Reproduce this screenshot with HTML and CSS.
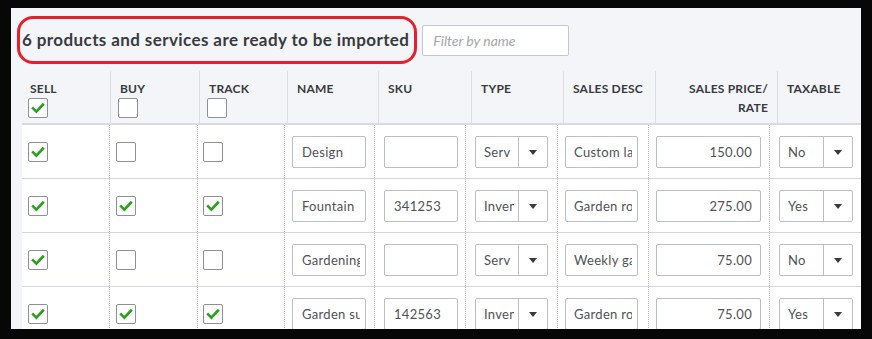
FILE: index.html
```html
<!DOCTYPE html>
<html>
<head>
<meta charset="utf-8">
<link rel="stylesheet" href="styles.css">
</head>
<body>
<div class="panel">
  <div class="titlebar">
    <h1 class="title">6 products and services are ready to be imported</h1>
    <div class="filter">Filter by name</div>
  </div>

  <div class="head">
    <div class="hc"><span>SELL</span><span class="cb checked"><svg viewBox="0 0 20 20"><path d="M4.6 10.4 L8.2 14 L15.4 6.4"/></svg></span></div>
    <div class="hc"><span>BUY</span><span class="cb"></span></div>
    <div class="hc"><span>TRACK</span><span class="cb"></span></div>
    <div class="hc">NAME</div>
    <div class="hc">SKU</div>
    <div class="hc">TYPE</div>
    <div class="hc">SALES DESC</div>
    <div class="hc right">SALES PRICE/<br>RATE</div>
    <div class="hc">TAXABLE</div>
  </div>

  <div class="row">
    <div class="bc"><span class="cb checked"><svg viewBox="0 0 20 20"><path d="M4.6 10.4 L8.2 14 L15.4 6.4"/></svg></span></div>
    <div class="bc"><span class="cb"></span></div>
    <div class="bc"><span class="cb"></span></div>
    <div class="bc"><div class="inp"><span class="t">Design</span></div></div>
    <div class="bc"><div class="inp"><span class="t"></span></div></div>
    <div class="bc"><div class="sel"><span class="val"><span class="t">Serv</span></span><span class="arr"></span></div></div>
    <div class="bc"><div class="inp"><span class="t">Custom lawn design</span></div></div>
    <div class="bc"><div class="inp num"><span class="t">150.00</span></div></div>
    <div class="bc"><div class="sel tax"><span class="val"><span class="t">No</span></span><span class="arr"></span></div></div>
  </div>

  <div class="row">
    <div class="bc"><span class="cb checked"><svg viewBox="0 0 20 20"><path d="M4.6 10.4 L8.2 14 L15.4 6.4"/></svg></span></div>
    <div class="bc"><span class="cb checked"><svg viewBox="0 0 20 20"><path d="M4.6 10.4 L8.2 14 L15.4 6.4"/></svg></span></div>
    <div class="bc"><span class="cb checked"><svg viewBox="0 0 20 20"><path d="M4.6 10.4 L8.2 14 L15.4 6.4"/></svg></span></div>
    <div class="bc"><div class="inp"><span class="t">Fountain</span></div></div>
    <div class="bc"><div class="inp"><span class="t">341253</span></div></div>
    <div class="bc"><div class="sel"><span class="val"><span class="t">Inventory</span></span><span class="arr"></span></div></div>
    <div class="bc"><div class="inp"><span class="t">Garden rock fountain</span></div></div>
    <div class="bc"><div class="inp num"><span class="t">275.00</span></div></div>
    <div class="bc"><div class="sel tax"><span class="val"><span class="t">Yes</span></span><span class="arr"></span></div></div>
  </div>

  <div class="row">
    <div class="bc"><span class="cb checked"><svg viewBox="0 0 20 20"><path d="M4.6 10.4 L8.2 14 L15.4 6.4"/></svg></span></div>
    <div class="bc"><span class="cb"></span></div>
    <div class="bc"><span class="cb"></span></div>
    <div class="bc"><div class="inp"><span class="t">Gardening</span></div></div>
    <div class="bc"><div class="inp"><span class="t"></span></div></div>
    <div class="bc"><div class="sel"><span class="val"><span class="t">Serv</span></span><span class="arr"></span></div></div>
    <div class="bc"><div class="inp"><span class="t">Weekly gardening</span></div></div>
    <div class="bc"><div class="inp num"><span class="t">75.00</span></div></div>
    <div class="bc"><div class="sel tax"><span class="val"><span class="t">No</span></span><span class="arr"></span></div></div>
  </div>

  <div class="row">
    <div class="bc"><span class="cb checked"><svg viewBox="0 0 20 20"><path d="M4.6 10.4 L8.2 14 L15.4 6.4"/></svg></span></div>
    <div class="bc"><span class="cb checked"><svg viewBox="0 0 20 20"><path d="M4.6 10.4 L8.2 14 L15.4 6.4"/></svg></span></div>
    <div class="bc"><span class="cb checked"><svg viewBox="0 0 20 20"><path d="M4.6 10.4 L8.2 14 L15.4 6.4"/></svg></span></div>
    <div class="bc"><div class="inp"><span class="t">Garden supplies</span></div></div>
    <div class="bc"><div class="inp"><span class="t">142563</span></div></div>
    <div class="bc"><div class="sel"><span class="val"><span class="t">Inventory</span></span><span class="arr"></span></div></div>
    <div class="bc"><div class="inp"><span class="t">Garden rock</span></div></div>
    <div class="bc"><div class="inp num"><span class="t">75.00</span></div></div>
    <div class="bc"><div class="sel tax"><span class="val"><span class="t">Yes</span></span><span class="arr"></span></div></div>
  </div>
</div>
</body>
</html>
```

FILE: styles.css
```css
* { box-sizing: border-box; }
html, body { margin: 0; padding: 0; }
body {
  background: #070707;
  width: 872px;
  height: 339px;
  overflow: hidden;
  font-family: "Lato", "Open Sans", sans-serif;
  color: #393a3d;
  padding: 8px 11px 0 11px;
}
.panel {
  width: 850px;
  height: 321px;
  background: #f4f5f8;
  overflow: hidden;
  padding-left: 11px;
}
.titlebar {
  display: flex;
  align-items: center;
  padding-top: 8px;
  margin-bottom: 7px;
  margin-left: -5px;
}
.title {
  margin: 0;
  font-size: 17px;
  letter-spacing: 0.4px;
  font-weight: 700;
  line-height: 20px;
  height: 48px;
  border: 3px solid #e5202c;
  border-radius: 16px;
  padding: 11px 5px 0 2px;
  white-space: nowrap;
  color: #393a3d;
}
.filter {
  margin-left: 5px;
  width: 147px;
  height: 31px;
  background: #fff;
  border: 1px solid #c4c7cc;
  border-radius: 2px;
  font-size: 14px;
  font-style: italic;
  color: #a3a6ab;
  padding: 6px 0 0 10px;
}
.head {
  display: grid;
  grid-template-columns: 88px 89px 88px 91px 93px 92px 92px 122px 1fr;
  height: 54px;
  border-bottom: 2px solid #d8dadf;
}
.hc {
  border-left: 1px solid #dcdee3;
  padding: 8px 9px 0 9px;
  font-size: 12px;
  letter-spacing: 0.2px;
  font-weight: 700;
  line-height: 19px;
  display: flex;
  flex-direction: column;
  align-items: flex-start;
}
.hc:first-child { border-left: none; padding-left: 8px; }
.hc.right { text-align: right; align-items: flex-end; display: block; }
.hc .cb { margin-left: -2px; }

.row {
  display: grid;
  grid-template-columns: 87px 88px 87px 90px 91px 92px 91px 121px 1fr;
  height: 54px;
  background: #fff;
  border-bottom: 1px solid #d4d6db;
}
.bc {
  border-left: 1px dotted #b9bbbf;
  display: flex;
  align-items: center;
  padding-left: 9px;
}
.bc:first-child { border-left: none; padding-left: 6px; }
.bc:nth-child(2) { padding-left: 6px; }
.bc:nth-child(3) { padding-left: 5px; }
.bc:nth-child(4), .bc:nth-child(7), .bc:nth-child(8) { padding-left: 7px; }

.cb {
  width: 20px;
  height: 20px;
  border: 1px solid #8d9096;
  border-radius: 2px;
  background: #fff;
  display: inline-block;
  flex: none;
}
.cb svg { width: 18px; height: 18px; display: block; }
.cb svg path {
  fill: none;
  stroke: #2ca01c;
  stroke-width: 3;
  stroke-linecap: square;
  stroke-linejoin: miter;
}

.t {
  display: block;
  overflow: hidden;
  white-space: nowrap;
}

.inp {
  width: 74px;
  height: 32px;
  border: 1px solid #babec5;
  border-radius: 2px;
  background: #fff;
  font-size: 13px;
  letter-spacing: 0.3px;
  line-height: 30px;
  padding: 0 5px 0 9px;
  color: #505155;
}
.bc:nth-child(7) .inp { width: 73px; padding-left: 8px; }
.inp.num { width: 105px; text-align: right; padding: 0 8px 0 0; }

.sel {
  width: 73px;
  height: 32px;
  border: 1px solid #babec5;
  border-radius: 2px;
  background: #fff;
  display: flex;
  font-size: 13px;
  letter-spacing: 0.3px;
  color: #505155;
}
.sel.tax { width: 74px; }
.sel .val {
  width: 43px;
  line-height: 30px;
  padding: 0 4px 0 8px;
  border-right: 1px solid #babec5;
  flex: none;
}
.sel.tax .val { width: 44px; }
.sel .arr {
  flex: 1;
  position: relative;
}
.sel .arr::after {
  content: "";
  position: absolute;
  left: 50%;
  top: 50%;
  margin-left: -4px;
  margin-top: -2px;
  border-left: 4px solid transparent;
  border-right: 4px solid transparent;
  border-top: 5px solid #393a3d;
}
```
